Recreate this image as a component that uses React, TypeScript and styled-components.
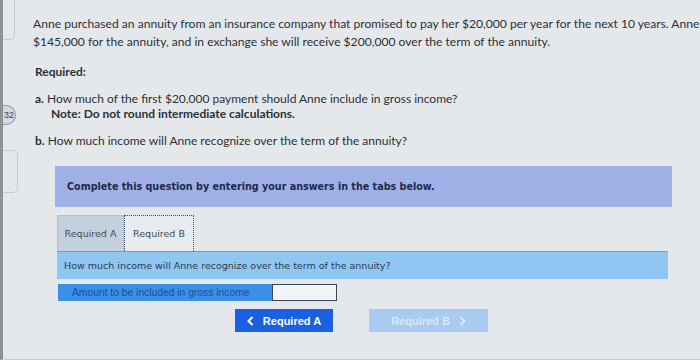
import styled, { createGlobalStyle } from "styled-components";

const Global = createGlobalStyle`
  html, body {
    margin: 0;
    padding: 0;
    background: #e4e8eb;
  }
  body {
    width: 700px;
    height: 360px;
    overflow: hidden;
  }
`;

const Page = styled.div`
  display: flex;
  width: 700px;
  height: 360px;
  background: #e4e8eb;
  border-left: 3px solid #8c9195;
  box-sizing: border-box;
  border-bottom: 1px solid #c9cdd0;
  overflow: hidden;
`;

const Sidebar = styled.div`
  width: 16px;
  flex: none;
  display: flex;
  flex-direction: column;
`;

const SideBox = styled.div<{ $top: number; $h: number; $w: number }>`
  margin-top: ${(p) => p.$top}px;
  height: ${(p) => p.$h}px;
  width: ${(p) => p.$w}px;
  border: 1px solid #c6cace;
  border-left: none;
  border-radius: 0 5px 5px 0;
  box-sizing: border-box;
`;

const Pill = styled.div`
  margin-top: 65px;
  width: 13px;
  height: 20px;
  border: 1px solid #8f99a3;
  border-left: none;
  border-radius: 0 10px 10px 0;
  background: #d4dbe2;
  box-sizing: border-box;
  font: 9px "Liberation Sans", Arial, sans-serif;
  color: #3a4048;
  display: flex;
  align-items: center;
  justify-content: flex-end;
  padding-right: 1px;
  overflow: hidden;
`;

const Main = styled.div`
  flex: 1;
  padding: 15px 0 0 14px;
  font-family: Lato, "Open Sans", sans-serif;
  color: #2b3036;
  white-space: nowrap;
`;

const Para = styled.p`
  margin: 0;
  font-size: 12.1px;
  line-height: 18px;
`;

const Heading = styled.p`
  margin: 12px 0 0 2px;
  font-size: 12px;
  font-weight: 700;
  line-height: 18px;
`;

const Item = styled.div<{ $gap: number }>`
  margin: ${(p) => p.$gap}px 0 0 2px;
  font-size: 12px;
  line-height: 15px;
`;

const Marker = styled.span`
  font-weight: 700;
`;

const Note = styled.div`
  padding-left: 16px;
  font-weight: 700;
`;

const Work = styled.div`
  margin: 18px 0 0 22px;
  width: 617px;
  font-family: "DejaVu Sans", Verdana, sans-serif;
`;

const Banner = styled.div`
  height: 41px;
  background: #9eb0e6;
  display: flex;
  align-items: center;
  padding-left: 12px;
  font-size: 9.6px;
  font-weight: 700;
  color: #1f2a4a;
`;

const Tabs = styled.div`
  display: flex;
  margin: 8px 0 0 2px;
  height: 36px;
`;

const Tab = styled.div<{ $active?: boolean }>`
  width: ${(p) => (p.$active ? 70 : 67)}px;
  box-sizing: border-box;
  display: flex;
  align-items: center;
  justify-content: center;
  font-size: 9.5px;
  color: #3f4a5c;
  background: ${(p) => (p.$active ? "#e9ecef" : "#c5d0de")};
  border: ${(p) => (p.$active ? "1px dotted #3c4a66" : "1px solid #b4c0cf")};
  border-bottom: none;
`;

const QuestionBar = styled.div`
  margin-left: 2px;
  width: 611px;
  height: 28px;
  box-sizing: border-box;
  border-top: 1px solid #6a9ed0;
  background: #90c6f2;
  display: flex;
  align-items: center;
  padding-left: 7px;
  font-size: 9.5px;
  color: #2e3a4c;
`;

const AmountRow = styled.div`
  display: flex;
  margin: 5px 0 0 3px;
  height: 17px;
`;

const AmountLabel = styled.div`
  width: 214px;
  background: #3a8fe6;
  color: #1c4f9a;
  font-family: "Liberation Sans", Arial, sans-serif;
  font-size: 10.3px;
  display: flex;
  align-items: center;
  padding-left: 14px;
  box-sizing: border-box;
`;

const AmountInput = styled.input`
  width: 65px;
  height: 17px;
  box-sizing: border-box;
  border: 1px solid #3a4658;
  background: #f2f4f6;
  margin: 0;
  padding: 0;
`;

const Nav = styled.div`
  display: flex;
  gap: 36px;
  margin: 8px 0 0 180px;
`;

const NavButton = styled.button<{ $disabled?: boolean }>`
  height: 23px;
  width: ${(p) => (p.$disabled ? 119 : 98)}px;
  border: none;
  background: ${(p) => (p.$disabled ? "#a9cbf2" : "#1b5fe3")};
  color: ${(p) => (p.$disabled ? "#dbe9fa" : "#ffffff")};
  font-family: "Liberation Sans", Arial, sans-serif;
  font-size: 11px;
  font-weight: 700;
  display: flex;
  align-items: center;
  justify-content: center;
  gap: 9px;
  padding: 0;
`;

const Chevron = ({ dir }: { dir: "left" | "right" }) => (
  <svg width="7" height="10" viewBox="0 0 7 10">
    <path
      d={dir === "left" ? "M5.5 1 L1.5 5 L5.5 9" : "M1.5 1 L5.5 5 L1.5 9"}
      stroke="currentColor"
      strokeWidth="2"
      fill="none"
    />
  </svg>
);

export default function App() {
  return (
    <>
      <Global />
      <Page>
        <Sidebar>
          <SideBox $top={-4} $h={44} $w={12} />
          <Pill>32</Pill>
          <SideBox $top={25} $h={43} $w={15} />
        </Sidebar>
        <Main>
          <Para>
            Anne purchased an annuity from an insurance company that promised to pay her $20,000 per year for the next 10 years. Anne
            <br />
            $145,000 for the annuity, and in exchange she will receive $200,000 over the term of the annuity.
          </Para>
          <Heading>Required:</Heading>
          <Item $gap={10}>
            <Marker>a.</Marker> How much of the first $20,000 payment should Anne include in gross income?
            <Note>Note: Do not round intermediate calculations.</Note>
          </Item>
          <Item $gap={12}>
            <Marker>b.</Marker> How much income will Anne recognize over the term of the annuity?
          </Item>
          <Work>
            <Banner>Complete this question by entering your answers in the tabs below.</Banner>
            <Tabs>
              <Tab>Required A</Tab>
              <Tab $active>Required B</Tab>
            </Tabs>
            <QuestionBar>How much income will Anne recognize over the term of the annuity?</QuestionBar>
            <AmountRow>
              <AmountLabel>Amount to be included in gross income</AmountLabel>
              <AmountInput />
            </AmountRow>
            <Nav>
              <NavButton>
                <Chevron dir="left" />
                Required A
              </NavButton>
              <NavButton $disabled>
                Required B
                <Chevron dir="right" />
              </NavButton>
            </Nav>
          </Work>
        </Main>
      </Page>
    </>
  );
}
